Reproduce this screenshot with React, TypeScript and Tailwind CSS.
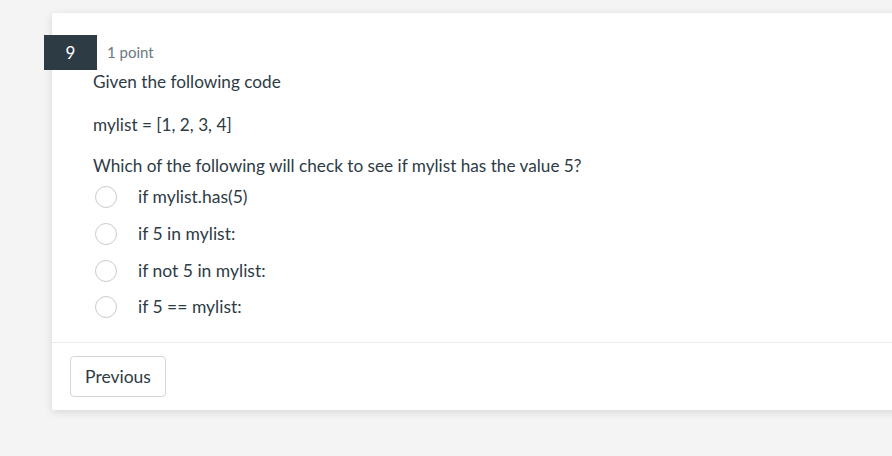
import React from 'react';

const options = ['if mylist.has(5)', 'if 5 in mylist:', 'if not 5 in mylist:', 'if 5 == mylist:'];

const App = () => {
    return (
        <div className="min-h-[456px] bg-[#f4f4f4] pt-[13px] pl-[52px] overflow-hidden" style={{ fontFamily: 'Lato, "Open Sans", sans-serif' }}>
            <div className="relative w-[880px] h-[397px] bg-white shadow-[0_2px_8px_rgba(0,0,0,0.12)] rounded-l-[2px]">
                <div className="absolute left-[-8px] top-[22px] w-[53px] h-[35px] bg-[#2d3b45] text-white flex items-center justify-center text-[17px]">
                    9
                </div>
                <div className="pt-[29px] pl-[41px] text-[#2d3b45]">
                    <div className="pl-[14px] h-[20px] leading-[20px] text-[15px] text-[#6b7780]">1 point</div>
                    <div className="mt-[8px] leading-[24px] text-[17.2px]">Given the following code</div>
                    <div className="mt-[19px] leading-[24px] text-[17.2px]">mylist = [1, 2, 3, 4]</div>
                    <div className="mt-[17px] leading-[24px] text-[17.2px]">Which of the following will check to see if mylist has the value 5?</div>
                    <div className="mt-[1px] flex flex-col">
                        {options.map((o) => (
                            <div key={o} className="h-[36.7px] flex items-center">
                                <div className="ml-[2px] w-[22px] h-[22px] rounded-full border border-[#c7cdd1] bg-white"></div>
                                <span className="ml-[21px] text-[17.5px]">{o}</span>
                            </div>
                        ))}
                    </div>
                </div>
                <div className="mt-[16px] border-t border-[#ececec]"></div>
                <div className="pt-[13px] pl-[18px]">
                    <button className="w-[96px] h-[41px] border border-[#d4d6d8] rounded-[4px] bg-white text-[17.5px] text-[#2d3b45] pt-[1px]">
                        Previous
                    </button>
                </div>
            </div>
        </div>
    );
};

export default App;
